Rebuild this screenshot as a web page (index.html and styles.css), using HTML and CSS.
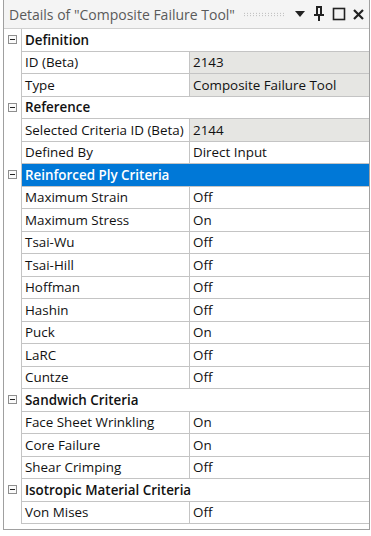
FILE: index.html
```html
<!DOCTYPE html>
<html lang="en">
<head>
  <meta charset="UTF-8" />
  <title>Details of "Composite Failure Tool"</title>
  <link rel="stylesheet" href="styles.css">
</head>
<body>
  <div class="panel">
    <!-- Title bar -->
    <div class="titlebar">
      <span class="title">Details of "Composite Failure Tool"</span>
      <span class="grip"></span>
      <svg class="icon" width="12" height="12" viewBox="0 0 12 12"><path d="M1 3h10L6 9z" fill="#222"/></svg>
      <svg class="icon" width="14" height="16" viewBox="0 0 14 16"><path d="M4 1h6M5 1v8M9 1v8M2 9h10M7 9v6" stroke="#222" stroke-width="2" fill="none"/></svg>
      <svg class="icon" width="14" height="14" viewBox="0 0 14 14"><rect x="1.5" y="1.5" width="11" height="11" stroke="#222" stroke-width="1.6" fill="none"/></svg>
      <svg class="icon" width="13" height="13" viewBox="0 0 13 13"><path d="M2 2l9 9M11 2l-9 9" stroke="#222" stroke-width="2.2"/></svg>
    </div>

    <div class="grid">
      <div class="row group"><span class="toggle"></span><div class="head">Definition</div></div>
      <div class="row"><span class="tree"></span><div class="key">ID (Beta)</div><div class="val ro">2143</div></div>
      <div class="row"><span class="tree"></span><div class="key">Type</div><div class="val ro">Composite Failure Tool</div></div>

      <div class="row group"><span class="toggle"></span><div class="head">Reference</div></div>
      <div class="row"><span class="tree"></span><div class="key">Selected Criteria ID (Beta)</div><div class="val ro">2144</div></div>
      <div class="row"><span class="tree"></span><div class="key">Defined By</div><div class="val">Direct Input</div></div>

      <div class="row group"><span class="toggle"></span><div class="head selected">Reinforced Ply Criteria</div></div>
      <div class="row"><span class="tree"></span><div class="key">Maximum Strain</div><div class="val">Off</div></div>
      <div class="row"><span class="tree"></span><div class="key">Maximum Stress</div><div class="val">On</div></div>
      <div class="row"><span class="tree"></span><div class="key">Tsai-Wu</div><div class="val">Off</div></div>
      <div class="row"><span class="tree"></span><div class="key">Tsai-Hill</div><div class="val">Off</div></div>
      <div class="row"><span class="tree"></span><div class="key">Hoffman</div><div class="val">Off</div></div>
      <div class="row"><span class="tree"></span><div class="key">Hashin</div><div class="val">Off</div></div>
      <div class="row"><span class="tree"></span><div class="key">Puck</div><div class="val">On</div></div>
      <div class="row"><span class="tree"></span><div class="key">LaRC</div><div class="val">Off</div></div>
      <div class="row"><span class="tree"></span><div class="key">Cuntze</div><div class="val">Off</div></div>

      <div class="row group"><span class="toggle"></span><div class="head">Sandwich Criteria</div></div>
      <div class="row"><span class="tree"></span><div class="key">Face Sheet Wrinkling</div><div class="val">On</div></div>
      <div class="row"><span class="tree"></span><div class="key">Core Failure</div><div class="val">On</div></div>
      <div class="row"><span class="tree"></span><div class="key">Shear Crimping</div><div class="val">Off</div></div>

      <div class="row group"><span class="toggle"></span><div class="head">Isotropic Material Criteria</div></div>
      <div class="row"><span class="tree"></span><div class="key">Von Mises</div><div class="val">Off</div></div>
    </div>
  </div>
</body>
</html>
```

FILE: styles.css
```css
:root {
  --line: #c4c4c4;
  --border: #a0a0a0;
  --select: #0078d7;
  --readonly: #e6e6e3;
  --text: #111;
  --font-ui: 'Open Sans', 'Noto Sans', Arial, sans-serif;
}

body {
  margin: 0;
  font-family: var(--font-ui);
  font-size: 13.4px;
  color: var(--text);
  background: #fff;
}

.panel {
  width: 367px;
  height: 530px;
  margin-left: 3px;
  border-left: 1px solid var(--border);
  border-right: 1px solid var(--border);
  border-bottom: 1px solid var(--border);
  box-sizing: border-box;
}

.titlebar {
  height: 28px;
  display: flex;
  align-items: center;
  gap: 6px;
  padding: 0 4px 0 5px;
  background: #f4f4f4;
  border-bottom: 1px solid #d0d0d0;
}

.title {
  font-size: 14px;
  color: #5a5a5a;
  white-space: nowrap;
}

.grip {
  flex: 1;
  height: 5px;
  margin: 0 2px;
  background-image: radial-gradient(#b0b0b0 0.7px, transparent 0.9px);
  background-size: 3px 2.5px;
}

.icon {
  flex: none;
}

.grid {
  display: flex;
  flex-direction: column;
}

.row {
  display: grid;
  grid-template-columns: 18px 168px 1fr;
  height: 22.5px;
}

.row.group {
  grid-template-columns: 18px 1fr;
}

.tree,
.toggle {
  position: relative;
  border-right: 1px solid var(--line);
}

.toggle::before {
  content: "";
  position: absolute;
  left: 4px;
  top: 6px;
  width: 9px;
  height: 9px;
  border: 1px solid #8e8e8e;
  box-sizing: border-box;
  background: #fafafa;
}

.toggle::after {
  content: "";
  position: absolute;
  left: 6px;
  top: 10px;
  width: 5px;
  height: 1px;
  background: #222;
}

.head,
.key,
.val {
  display: flex;
  align-items: center;
  padding-left: 3px;
  border-bottom: 1px solid var(--line);
  white-space: nowrap;
  overflow: hidden;
}

.head {
  font-weight: 600;
}

.head.selected {
  background: var(--select);
  color: #fff;
}

.key {
  border-right: 1px solid var(--line);
}

.val.ro {
  background: var(--readonly);
}
```
